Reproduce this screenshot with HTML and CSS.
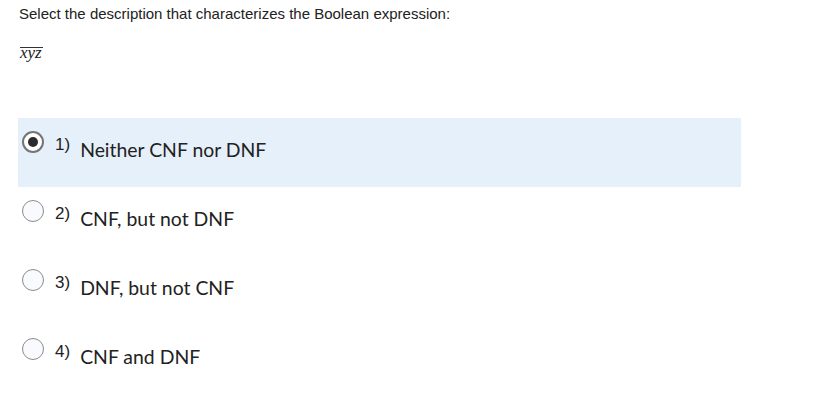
FILE: index.html
```html
<!DOCTYPE html>
<html>
<head>
<meta charset="utf-8">
<link rel="stylesheet" href="styles.css">
</head>
<body>
<div class="page">
  <p class="prompt">Select the description that characterizes the Boolean expression:</p>
  <div class="expr"><span class="over">xyz</span></div>
  <div class="options">
    <label class="option selected">
      <span class="radio checked"></span>
      <span class="num">1)</span>
      <span class="text">Neither CNF nor DNF</span>
    </label>
    <label class="option">
      <span class="radio"></span>
      <span class="num">2)</span>
      <span class="text">CNF, but not DNF</span>
    </label>
    <label class="option">
      <span class="radio"></span>
      <span class="num">3)</span>
      <span class="text">DNF, but not CNF</span>
    </label>
    <label class="option">
      <span class="radio"></span>
      <span class="num">4)</span>
      <span class="text">CNF and DNF</span>
    </label>
  </div>
</div>
</body>
</html>
```
FILE: styles.css
```css
html, body {
  margin: 0;
  padding: 0;
  background: #ffffff;
}
.page {
  padding: 5px 0 0 19px;
  font-family: "Liberation Sans", Arial, sans-serif;
  color: #222222;
}
.prompt {
  margin: 0;
  font-size: 15px;
  line-height: 18px;
}
.expr {
  display: flex;
  margin: 24px 0 0 1px;
  font-family: "Liberation Serif", "Times New Roman", serif;
  font-style: italic;
  font-size: 17px;
}
.over {
  line-height: 10px;
  border-top: 1px solid #333333;
  padding-right: 1px;
}
.options {
  margin: 60px 0 0 -1px;
  width: 723px;
  display: flex;
  flex-direction: column;
}
.option {
  height: 69px;
  display: flex;
  align-items: flex-start;
  padding: 13px 0 0 4px;
  box-sizing: border-box;
}
.option.selected {
  background: #e6f0fb;
}
.radio {
  width: 22px;
  height: 22px;
  box-sizing: border-box;
  border: 1px solid #8c8c8c;
  border-radius: 50%;
  background: #f9fafd;
  flex: none;
  display: flex;
  align-items: center;
  justify-content: center;
}
.radio.checked {
  border: 2px solid #757575;
  background: #ffffff;
}
.radio.checked::after {
  content: "";
  width: 10px;
  height: 10px;
  border-radius: 50%;
  background: #2b2b2b;
}
.num {
  margin: 4px 0 0 11px;
  font-size: 17px;
  line-height: 20px;
  color: #222222;
}
.text {
  margin: 7px 0 0 10px;
  font-family: Lato, "Liberation Sans", sans-serif;
  font-size: 19.4px;
  line-height: 24px;
  color: #222222;
}
```
